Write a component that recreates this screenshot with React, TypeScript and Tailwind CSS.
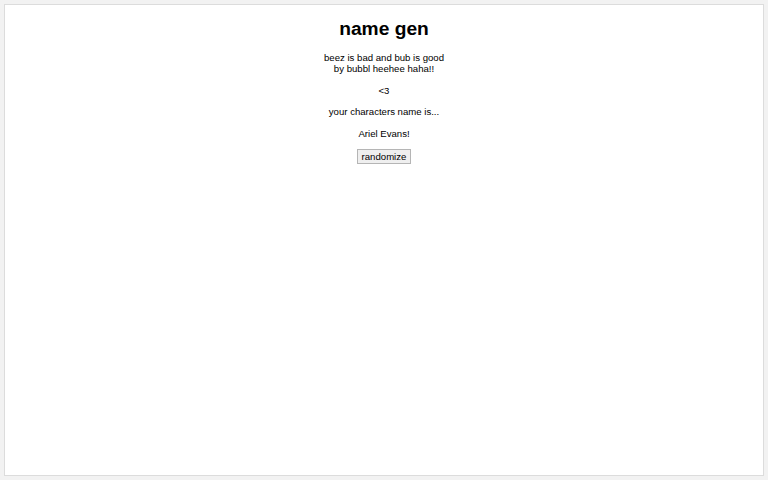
export default function App() {
  return (
    <div className="h-[480px] w-[768px] bg-[#f2f2f2] p-[4px] font-['Liberation_Sans',Arial,sans-serif] text-black">
      <div className="flex h-full flex-col items-center border border-[#dcdcdc] bg-white text-center text-[9.6px] leading-[11px]">
        <h1 className="mt-[13px] mb-[12px] text-[19.2px] font-bold leading-[22px]">name gen</h1>
        <p>
          beez is bad and bub is good
          <br />
          by bubbl heehee haha!!
        </p>
        <p className="mt-[10.6px]">&lt;3</p>
        <p className="mt-[10.6px]">your characters name is...</p>
        <p className="mt-[10.6px]">Ariel Evans!</p>
        <button className="mt-[10.6px] border border-[#b5b5b5] bg-[#efefef] px-[4px] py-[1px] text-[9.6px] leading-[11px]">
          randomize
        </button>
      </div>
    </div>
  );
}
